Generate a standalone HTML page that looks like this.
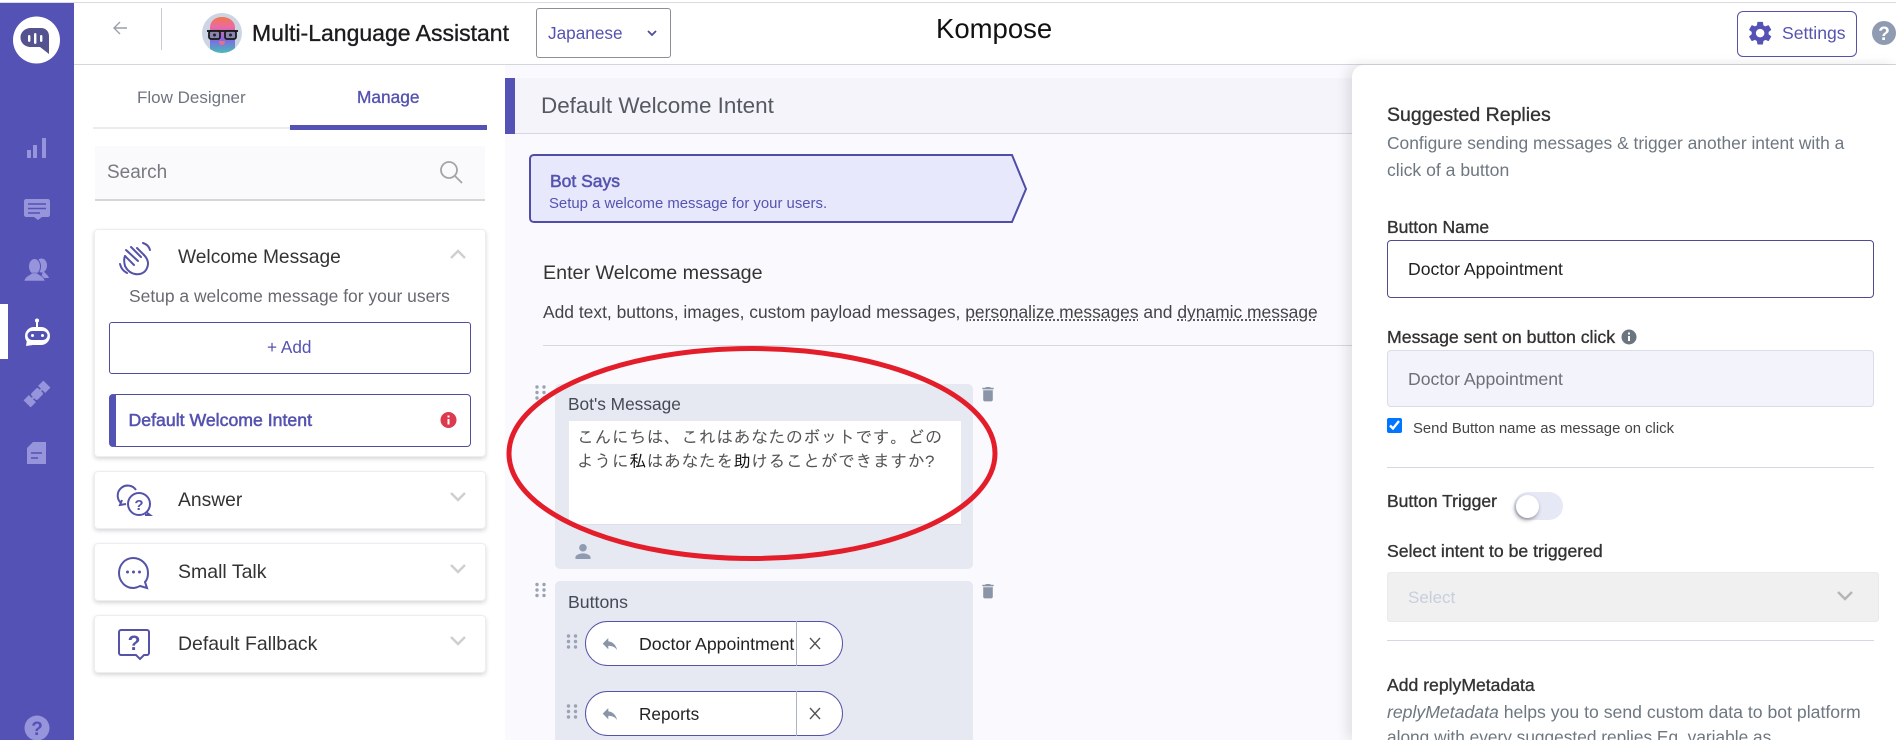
<!DOCTYPE html>
<html lang="en">
<head>
<meta charset="utf-8">
<title>Multi-Language Assistant</title>
<style>
html,body{margin:0;padding:0;background:#fff;width:1896px;height:740px;overflow:hidden;}
#w{position:relative;width:1896px;height:740px;overflow:hidden;font-family:"Liberation Sans",Arial,sans-serif;color:#333;background:#fff;}
.b{position:absolute;box-sizing:border-box;}
.t{position:absolute;white-space:nowrap;line-height:20px;height:20px;}
.m{-webkit-text-stroke:.35px currentColor;}
.mb{-webkit-text-stroke:.55px currentColor;}
.p{color:#5553b0;}
.card{background:#fff;border:1px solid #eeeef2;border-radius:4px;box-shadow:0 2px 4px rgba(0,0,0,.16);}
.pill{background:#fff;border:1px solid #5553a8;border-radius:23px;}
svg.o{position:absolute;left:0;top:0;}
</style>
</head>
<body>
<div id="w">

<!-- top strip and header -->
<div class="b" style="left:0;top:2px;width:1896px;height:1px;background:#d9dbe0"></div>
<div class="b" style="left:74px;top:64px;width:1822px;height:1px;background:#d3d6dc;box-shadow:0 -2px 6px rgba(0,0,0,.05)"></div>

<!-- sidebar -->
<div class="b" style="left:0;top:3px;width:74px;height:737px;background:#5452b5"></div>
<div class="b" style="left:0;top:304px;width:8px;height:55px;background:#fff"></div>

<!-- main area -->
<div class="b" style="left:505px;top:65px;width:860px;height:675px;background:#fafafe"></div>
<div class="b" style="left:505px;top:78px;width:860px;height:56px;background:#f4f4fa;border-bottom:1px solid #d5d8e2"></div>
<div class="b" style="left:505px;top:78px;width:10px;height:56px;background:#5452b5"></div>
<div class="b" style="left:543px;top:345px;width:820px;height:1px;background:#d5d8e0"></div>

<!-- left column tabs -->
<div class="b" style="left:93px;top:127px;width:197px;height:2px;background:#ececf0"></div>
<div class="b" style="left:290px;top:125px;width:197px;height:5px;background:#5452b5"></div>
<div class="b" style="left:95px;top:146px;width:390px;height:55px;background:#fafafc;border-bottom:2px solid #d6d6da"></div>

<!-- cards -->
<div class="b card" style="left:94px;top:229px;width:392px;height:228px"></div>
<div class="b card" style="left:94px;top:471px;width:392px;height:58px"></div>
<div class="b card" style="left:94px;top:543px;width:392px;height:58px"></div>
<div class="b card" style="left:94px;top:615px;width:392px;height:58px"></div>
<div class="b" style="left:109px;top:322px;width:362px;height:52px;border:1px solid #4f4d9e;border-radius:3px;background:#fff"></div>
<div class="b" style="left:109px;top:394px;width:362px;height:53px;border:1px solid #4f4d9e;border-left:7px solid #5452b5;border-radius:4px;background:#fff"></div>

<!-- language select -->
<div class="b" style="left:536px;top:8px;width:135px;height:50px;border:1px solid #8d8f96;border-radius:3px;background:#fff"></div>

<!-- message cards -->
<div class="b" style="left:555px;top:384px;width:418px;height:185px;background:#e6e8f2;border-radius:5px"></div>
<div class="b" style="left:569px;top:421px;width:392px;height:104px;background:#fff;border-bottom:1px solid #dcdfe8"></div>
<div class="b" style="left:555px;top:581px;width:418px;height:159px;background:#e6e8f2;border-radius:5px 5px 0 0"></div>
<div class="b pill" style="left:585px;top:621px;width:258px;height:45px"></div>
<div class="b" style="left:796px;top:621px;width:1px;height:45px;background:#aeb2c4"></div>
<div class="b pill" style="left:585px;top:691px;width:258px;height:45px"></div>
<div class="b" style="left:796px;top:691px;width:1px;height:45px;background:#aeb2c4"></div>

<!-- settings button -->
<div class="b" style="left:1737px;top:11px;width:120px;height:46px;border:1px solid #5553a8;border-radius:6px;background:#fff"></div>

<!-- right panel -->
<div class="b" style="left:1352px;top:65px;width:544px;height:675px;background:#fff;border-top-left-radius:12px;box-shadow:-5px 0 12px rgba(0,0,0,.1)"></div>
<div class="b" style="left:1387px;top:240px;width:487px;height:58px;border:1.5px solid #4f4d8e;border-radius:4px;background:#fff"></div>
<div class="b" style="left:1387px;top:350px;width:487px;height:57px;border:1px solid #dadce8;border-radius:4px;background:#f3f3fb"></div>
<input type="checkbox" checked style="position:absolute;left:1387px;top:418px;width:15px;height:15px;margin:0">
<div class="b" style="left:1387px;top:467px;width:487px;height:1px;background:#d5d8e0"></div>
<div class="b" style="left:1514px;top:492px;width:49px;height:28px;background:#e6e8f5;border-radius:14px"></div>
<div class="b" style="left:1516px;top:495px;width:23px;height:23px;background:#fff;border-radius:50%;box-shadow:-1px 2px 4px rgba(0,0,0,.4)"></div>
<div class="b" style="left:1387px;top:572px;width:492px;height:50px;background:#f0f0f0;border:1px solid #eaeaea;border-radius:3px"></div>
<div class="b" style="left:1387px;top:640px;width:487px;height:1px;background:#d5d8e0"></div>

<!-- icons -->
<svg class="o" width="1896" height="740" viewBox="0 0 1896 740" xmlns="http://www.w3.org/2000/svg">
  <defs>
    <linearGradient id="gr" x1="0" y1="0" x2="0" y2="1">
      <stop offset="0" stop-color="#f0784a"/>
      <stop offset=".25" stop-color="#ee6aa0"/>
      <stop offset=".6" stop-color="#7d6ae2"/>
      <stop offset="1" stop-color="#3fc9b0"/>
    </linearGradient>
    <clipPath id="av"><circle cx="222" cy="33" r="20"/></clipPath>
    <g id="dots" fill="#9aa3b5">
      <circle cx="0" cy="0" r="1.7"/><circle cx="7" cy="0" r="1.7"/>
      <circle cx="0" cy="5.5" r="1.7"/><circle cx="7" cy="5.5" r="1.7"/>
      <circle cx="0" cy="11" r="1.7"/><circle cx="7" cy="11" r="1.7"/>
    </g>
    <path id="trash" fill="#8a96a8" d="M6 19c0 1.1.9 2 2 2h8c1.1 0 2-.9 2-2V7H6v12zM19 4h-3.5l-1-1h-5l-1 1H5v2h14V4z"/>
    <path id="reply" fill="#8a96a8" d="M10 9V5l-7 7 7 7v-4.1c5 0 8.5 1.6 11 5.1-1-5-4-10-11-11z"/>
  </defs>

  <!-- logo -->
  <ellipse cx="36.5" cy="40" rx="23.5" ry="23.5" fill="#fff"/>
  <path d="M31 28h10c5 0 8 3.5 8 8v18l-9-7H31c-6 0-10.500-4-10.500-9.500S25 28 31 28z" fill="#55538f"/>
  <rect x="28" y="35" width="2.400" height="7" rx="1.200" fill="#fff"/>
  <rect x="34" y="33" width="2.400" height="11" rx="1.200" fill="#fff"/>
  <rect x="40" y="35" width="2.400" height="7" rx="1.200" fill="#fff"/>

  <!-- chart -->
  <g fill="#9694da">
    <rect x="27" y="150" width="4" height="8"/>
    <rect x="33" y="145" width="4" height="13"/>
    <rect x="42" y="138" width="4" height="20"/>
  </g>
  <!-- chat -->
  <path d="M26 199h22c1 0 2 1 2 2v14c0 1-1 2-2 2h-6l-4 3-4-3H26c-1 0-2-1-2-2v-14c0-1 1-2 2-2z" fill="#9694da"/>
  <g stroke="#5452b5" stroke-width="1.600"><path d="M28 204h18M28 208.500h18M28 213h12"/></g>
  <!-- users -->
  <ellipse cx="41.500" cy="265.500" rx="5.500" ry="7" fill="#9694da"/>
  <path d="M43 271c2 2 5 4 6 7h-8z" fill="#9694da"/>
  <ellipse cx="34.500" cy="266.500" rx="6" ry="8" fill="#9694da" stroke="#5452b5" stroke-width="1"/>
  <path d="M24 281c1-5 6-6 8-8h5c2 2 7 3 8 8z" fill="#9694da" stroke="#5452b5" stroke-width=".6"/>
  <!-- bot -->
  <circle cx="37" cy="320.500" r="2" fill="#fff"/>
  <rect x="36" y="321" width="2" height="6" fill="#fff"/>
  <rect x="25" y="327" width="25" height="18" rx="9" fill="#fff"/>
  <path d="M27 340l-1 6 7-1z" fill="#fff"/>
  <rect x="27.500" y="331" width="20" height="9" rx="4.500" fill="#5452b5"/>
  <circle cx="32.500" cy="335.500" r="1.500" fill="#fff"/>
  <circle cx="42.500" cy="335.500" r="1.500" fill="#fff"/>
  <!-- satellite -->
  <g transform="rotate(-45 37 394)" fill="#9694da">
    <rect x="32" y="389.500" width="10" height="9" rx="2"/>
    <rect x="23" y="389" width="7.500" height="10"/>
    <rect x="43.500" y="389" width="7.500" height="10"/>
    <rect x="29" y="393" width="16" height="2"/>
  </g>
  <!-- doc -->
  <path d="M33 442h13v22H27v-16z" fill="#9694da"/>
  <path d="M31 453h11M31 458h7" stroke="#5452b5" stroke-width="1.600"/>
  <!-- help sidebar -->
  <circle cx="37" cy="728" r="12.500" fill="#9694da"/>
  <text x="37" y="735" text-anchor="middle" font-family="Liberation Sans" font-weight="700" font-size="19" fill="#5452b5">?</text>

  <!-- back arrow -->
  <path d="M127 28h-13M120 22l-6 6 6 6" fill="none" stroke="#9aa0aa" stroke-width="1.400"/>
  <rect x="161" y="8" width="1" height="42" fill="#c9ccd2"/>

  <!-- avatar -->
  <circle cx="222" cy="33" r="20" fill="#cdd5e4"/>
  <g clip-path="url(#av)">
    <path d="M210 55V28c0-7 5-11 12-11s13 4 13 11v27z" fill="url(#gr)"/>
    <rect x="207" y="30" width="31" height="2" fill="#222"/>
    <rect x="209" y="31" width="11" height="8" rx="2" fill="#8a84b0" stroke="#1a1a1a" stroke-width="1.800"/>
    <rect x="225" y="31" width="11" height="8" rx="2" fill="#8a84b0" stroke="#1a1a1a" stroke-width="1.800"/>
    <circle cx="214.500" cy="35" r="1.500" fill="#222"/>
    <circle cx="230.500" cy="35" r="1.500" fill="#222"/>
    <path d="M219 41h6c0 3-1.500 4-3 4s-3-1-3-4z" fill="#f06a8c"/>
  </g>

  <!-- select chevron -->
  <path d="M648 31l4 4 4-4" fill="none" stroke="#4f4d9e" stroke-width="1.800"/>

  <!-- gear -->
  <g transform="translate(1746 19) scale(1.180)">
    <path fill="#5452b5" d="M19.140 12.940c.04-.3.06-.61.06-.94 0-.32-.02-.64-.07-.94l2.030-1.580c.18-.14.23-.41.12-.61l-1.920-3.320c-.12-.22-.37-.29-.59-.22l-2.390.96c-.5-.38-1.030-.7-1.620-.94l-.36-2.540c-.04-.24-.24-.41-.48-.41h-3.840c-.24 0-.43.17-.47.41l-.36 2.540c-.59.24-1.130.57-1.620.94l-2.390-.96c-.22-.08-.47 0-.59.22L2.740 8.870c-.12.21-.08.47.12.61l2.030 1.580c-.05.3-.09.63-.09.94s.02.64.07.94l-2.030 1.580c-.18.14-.23.41-.12.61l1.920 3.320c.12.22.37.29.59.22l2.390-.96c.5.38 1.030.7 1.620.94l.36 2.540c.05.24.24.41.48.41h3.840c.24 0 .44-.17.47-.41l.36-2.540c.59-.24 1.130-.56 1.620-.94l2.390.96c.22.08.47 0 .59-.22l1.920-3.320c.12-.22.07-.47-.12-.61l-2.010-1.580zM12 15.600c-1.980 0-3.600-1.620-3.600-3.600s1.620-3.600 3.600-3.600 3.600 1.620 3.600 3.600-1.620 3.600-3.600 3.600z"/>
  </g>
  <!-- help top right -->
  <circle cx="1884" cy="33" r="12" fill="#8f9bb0"/>
  <text x="1884" y="40" text-anchor="middle" font-family="Liberation Sans" font-weight="700" font-size="19" fill="#fff">?</text>

  <!-- search icon -->
  <circle cx="449" cy="170" r="8" fill="none" stroke="#a5a5a5" stroke-width="1.800"/>
  <path d="M455 176l7 7" stroke="#a5a5a5" stroke-width="1.800"/>

  <!-- hand -->
  <g fill="none" stroke="#5553a8" stroke-width="2" stroke-linecap="round">
    <path d="M125 256l9 9M126 250l12 11M131 247l10 10M137 248l7 7"/>
    <path d="M144 255c4 4 5 9 3 13-2 5-7 7-12 6-5-1-8-4-10-8"/>
    <path d="M125 256c-1 2-1 6 0 10"/>
    <path d="M143 243c3 1 6 3 7 7M120 264c1 4 3 7 7 9"/>
  </g>
  <!-- answer -->
  <g fill="none" stroke="#5553a8" stroke-width="2">
    <path d="M136 490A10 10 0 1 0 121 503"/>
    <path d="M122 500l-2 5 6-1"/>
    <circle cx="139" cy="504" r="11"/>
    <path d="M146 512l4 3-5 0"/>
  </g>
  <text x="139" y="510" text-anchor="middle" font-family="Liberation Sans" font-weight="700" font-size="15" fill="#5553a8">?</text>
  <!-- small talk -->
  <path d="M133 558c8 0 15 6 15 15 0 4-1 7-3 9l2 6-7-2c-2 1-5 2-7 2-8 0-14-7-14-15s6-15 14-15z" fill="none" stroke="#5553a8" stroke-width="2"/>
  <g fill="#5553a8"><circle cx="127.500" cy="572" r="1.500"/><circle cx="133.500" cy="572" r="1.500"/><circle cx="139.500" cy="572" r="1.500"/></g>
  <!-- fallback -->
  <path d="M121 630h26c1 0 2 1 2 2v21c0 1-1 2-2 2h-3l-4 4-4-4h-15c-1 0-2-1-2-2v-21c0-1 1-2 2-2z" fill="none" stroke="#5553a8" stroke-width="2"/>
  <text x="134" y="650" text-anchor="middle" font-family="Liberation Sans" font-weight="700" font-size="21" fill="#5553a8">?</text>

  <!-- chevrons -->
  <g fill="none" stroke="#cfcfd2" stroke-width="2.400">
    <path d="M451 258l7-7 7 7"/>
    <path d="M451 493l7 7 7-7"/>
    <path d="M451 565l7 7 7-7"/>
    <path d="M451 637l7 7 7-7"/>
  </g>
  <path d="M1838 592l7 7 7-7" fill="none" stroke="#b5b5b8" stroke-width="2.400"/>

  <!-- red info -->
  <circle cx="448.500" cy="420" r="8" fill="#dc3b4f"/>
  <rect x="447.500" y="419" width="2" height="5.500" fill="#fff"/>
  <rect x="447.500" y="415.500" width="2" height="2" fill="#fff"/>

  <!-- bot says arrow -->
  <path d="M534 155H1012L1026 189L1012 222H534C531.500 222 530 220.500 530 218V159C530 156.500 531.500 155 534 155Z" fill="#e8e8fc" stroke="#4f4da6" stroke-width="2"/>

  <!-- drag dots -->
  <use href="#dots" x="537" y="387"/>
  <use href="#dots" x="537" y="584.500"/>
  <use href="#dots" x="568.500" y="636"/>
  <use href="#dots" x="568.500" y="706"/>

  <!-- trash -->
  <use href="#trash" transform="translate(978.400 384.600) scale(.8)"/>
  <use href="#trash" transform="translate(978.400 581.600) scale(.8)"/>

  <!-- person -->
  <path transform="translate(571.700 540.200) scale(.94)" fill="#8f9bb0" d="M12 12c2.210 0 4-1.790 4-4s-1.790-4-4-4-4 1.790-4 4 1.790 4 4 4zm0 2c-2.670 0-8 1.340-8 4v2h16v-2c0-2.660-5.330-4-8-4z"/>

  <!-- reply -->
  <use href="#reply" transform="translate(600.300 634) scale(.8)"/>
  <use href="#reply" transform="translate(600.300 704) scale(.8)"/>

  <!-- pill x -->
  <g stroke="#555" stroke-width="1.400">
    <path d="M810 638l10 11M820 638l-10 11"/>
    <path d="M810 708l10 11M820 708l-10 11"/>
  </g>

  <!-- small grey info -->
  <circle cx="1629" cy="337" r="7.500" fill="#6b7580"/>
  <rect x="1628" y="336" width="2" height="5" fill="#fff"/>
  <rect x="1628" y="332.500" width="2" height="2" fill="#fff"/>
</svg>

<!-- text -->
<div class="t m" style="left:252px;top:23px;font-size:23px;color:#1c1c1f">Multi-Language Assistant</div>
<div class="t p" style="left:548px;top:23px;font-size:17.200px">Japanese</div>
<div class="t" style="left:936px;top:19px;font-size:27.500px;color:#111">Kompose</div>
<div class="t p" style="left:1782px;top:23px;font-size:17.600px">Settings</div>

<div class="t" style="left:137px;top:88px;font-size:17px;color:#6f7680">Flow Designer</div>
<div class="t m p" style="left:357px;top:87px;font-size:17.300px">Manage</div>
<div class="t" style="left:107px;top:163px;font-size:19px;color:#777a80">Search</div>

<div class="t" style="left:178px;top:248px;font-size:19.200px;color:#333">Welcome Message</div>
<div class="t" style="left:129px;top:286px;font-size:17.450px;color:#666a70">Setup a welcome message for your users</div>
<div class="t p" style="left:267px;top:337px;font-size:17.200px">+ Add</div>
<div class="t mb p" style="left:128.500px;top:410px;font-size:17.700px">Default Welcome Intent</div>
<div class="t" style="left:178px;top:491px;font-size:19.300px;color:#333">Answer</div>
<div class="t" style="left:178px;top:562px;font-size:19.500px;color:#333">Small Talk</div>
<div class="t" style="left:178px;top:634px;font-size:19.450px;color:#333">Default Fallback</div>

<div class="t" style="left:541px;top:96px;font-size:22.450px;color:#555a60">Default Welcome Intent</div>
<div class="t mb p" style="left:550px;top:171px;font-size:17.500px">Bot Says</div>
<div class="t p" style="left:549px;top:194px;font-size:14.900px">Setup a welcome message for your users.</div>
<div class="t" style="left:543px;top:263px;font-size:19.700px;color:#333">Enter Welcome message</div>
<div class="t" style="left:543px;top:302px;font-size:17.430px;color:#444">Add text, buttons, images, custom payload messages, <span style="text-decoration:underline dotted;text-underline-offset:2px">personalize messages</span> and <span style="text-decoration:underline dotted;text-underline-offset:2px">dynamic message</span></div>

<div class="t" style="left:568px;top:394px;font-size:17.300px;color:#444a55">Bot's Message</div>
<div class="t" style="left:577px;top:428px;font-size:17px;letter-spacing:.4px;color:#555;font-family:'Liberation Sans','IPAGothic','Noto Sans CJK JP',sans-serif">こんにちは、これはあなたのボットです。どの</div>
<div class="t" style="left:577px;top:452px;font-size:17px;letter-spacing:.4px;color:#555;font-family:'Liberation Sans','IPAGothic','Noto Sans CJK JP',sans-serif">ように<span style="color:#111">私</span>はあなたを<span style="color:#111">助</span>けることができますか?</div>
<div class="t" style="left:568px;top:592px;font-size:17.700px;color:#444a55">Buttons</div>
<div class="t" style="left:639px;top:634px;font-size:17.700px;width:157px;overflow:hidden;color:#222">Doctor Appointment</div>
<div class="t" style="left:639px;top:704px;font-size:17.200px;color:#222">Reports</div>

<div class="t m" style="left:1387px;top:105px;font-size:19.500px;color:#333">Suggested Replies</div>
<div class="t" style="left:1387px;top:133px;font-size:17.400px;color:#6e7780">Configure sending messages &amp; trigger another intent with a</div>
<div class="t" style="left:1387px;top:160px;font-size:17.600px;color:#6e7780">click of a button</div>
<div class="t m" style="left:1387px;top:217px;font-size:17.500px;color:#333">Button Name</div>
<div class="t" style="left:1408px;top:259px;font-size:17.650px;color:#222">Doctor Appointment</div>
<div class="t m" style="left:1387px;top:327px;font-size:17.700px;color:#333">Message sent on button click</div>
<div class="t" style="left:1408px;top:369px;font-size:17.650px;color:#6e7078">Doctor Appointment</div>
<div class="t" style="left:1413px;top:419px;font-size:14.860px;color:#444">Send Button name as message on click</div>
<div class="t m" style="left:1387px;top:491px;font-size:17.500px;color:#333">Button Trigger</div>
<div class="t m" style="left:1387px;top:541px;font-size:17.650px;color:#333">Select intent to be triggered</div>
<div class="t" style="left:1408px;top:588px;font-size:17px;color:#c9cede">Select</div>
<div class="t m" style="left:1387px;top:675px;font-size:17.600px;color:#333">Add replyMetadata</div>
<div class="t" style="left:1387px;top:702px;font-size:17.650px;color:#6e7780"><i>replyMetadata</i> helps you to send custom data to bot platform</div>
<div class="t" style="left:1387px;top:727px;font-size:17.300px;color:#6e7780">along with every suggested replies Eg. variable as</div>

<!-- red hand-drawn ellipse -->
<svg class="o" width="1896" height="740" viewBox="0 0 1896 740" xmlns="http://www.w3.org/2000/svg">
  <ellipse cx="752" cy="453.500" rx="243" ry="105" fill="none" stroke="#e31e2a" stroke-width="5"/>
</svg>
</div>
</body>
</html>
